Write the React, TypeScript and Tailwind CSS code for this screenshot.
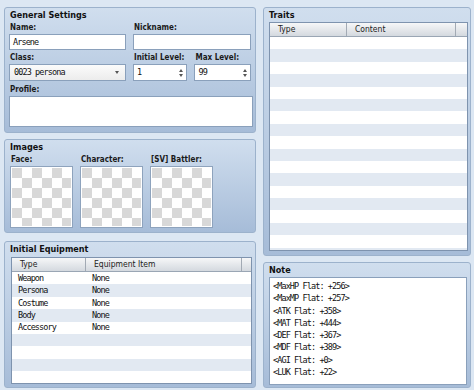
import React from "react";

const sans = "font-['DejaVu_Sans_Condensed','DejaVu_Sans',sans-serif] font-stretch-condensed";
const mono = "font-['DejaVu_Sans_Mono',monospace] text-[8.5px] tracking-[-0.9px]";

function Panel({ title, className, children }: { title: string; className?: string; children: React.ReactNode }) {
  return (
    <div
      className={`flex flex-col rounded-[3px] border border-[#9cb2cc] bg-linear-to-b from-[#d0deee] to-[#a6bcd8] px-[4px] ${className ?? ""}`}
    >
      <div className={`${sans} mt-[1px] h-[12px] shrink-0 pl-[1px] text-[9px] font-bold leading-[12px] text-[#111]`}>{title}</div>
      {children}
    </div>
  );
}

function Label({ children }: { children: React.ReactNode }) {
  return <div className={`${sans} h-[13px] pl-[1px] text-[8px] font-bold leading-[13px] text-[#1a1a1a]`}>{children}</div>;
}

function TextBox({ value, className }: { value?: string; className?: string }) {
  return (
    <div className={`flex h-[16px] items-center border border-[#8aa0bb] bg-white pl-[3px] ${mono} text-[#111] ${className ?? ""}`}>
      {value}
    </div>
  );
}

function Spin({ value }: { value: string }) {
  return (
    <div className={`flex h-[17px] items-center justify-between border border-[#8aa0bb] bg-white pl-[3px] pr-[3px] ${mono} text-[#111]`}>
      <span>{value}</span>
      <span className="flex flex-col items-center gap-[2px]">
        <span className="h-0 w-0 border-x-[2.5px] border-b-[3px] border-x-transparent border-b-[#555]" />
        <span className="h-0 w-0 border-x-[2.5px] border-t-[3px] border-x-transparent border-t-[#555]" />
      </span>
    </div>
  );
}

function Checker() {
  return (
    <div className="h-[62px] w-[63px] border border-[#8ea3bd] bg-white p-[1px]">
      <div className="h-full w-full bg-[repeating-conic-gradient(#fff_0_25%,#d8d8d8_0_50%)] bg-size-[20px_20px]" />
    </div>
  );
}

function Table({ cols, rows, total, className }: { cols: { name: string; w: string }[]; rows: string[][]; total: number; className?: string }) {
  const lines = Array.from({ length: total }, (_, i) => rows[i] ?? []);
  return (
    <div className={`flex shrink-0 flex-col overflow-hidden border border-[#7e93ae] bg-white ${className ?? ""}`}>
      <div className="flex h-[14px] shrink-0 border-b border-[#9aa6b4] bg-linear-to-b from-[#f6f7f8] to-[#d4d9df]">
        {cols.map((c) => (
          <div
            key={c.name}
            className={`${sans} ${c.w} border-r border-[#a2aab4] pl-[8px] text-[8.5px] leading-[13px] text-[#222]`}
          >
            {c.name}
          </div>
        ))}
        <div className="flex-1" />
      </div>
      {lines.map((r, i) => (
        <div key={i} className={`flex h-[12.4px] shrink-0 items-center ${i % 2 === 1 ? "bg-[#e2e9f2]" : "bg-white"}`}>
          {cols.map((c, j) => (
            <div key={j} className={`${c.w} pl-[6px] ${mono} text-[#111]`}>
              {r[j] ?? ""}
            </div>
          ))}
        </div>
      ))}
    </div>
  );
}

export default function App() {
  const equip = [
    ["Weapon", "None"],
    ["Persona", "None"],
    ["Costume", "None"],
    ["Body", "None"],
    ["Accessory", "None"],
  ];
  const notes = [
    "<MaxHP Flat: +256>",
    "<MaxMP Flat: +257>",
    "<ATK Flat: +358>",
    "<MAT Flat: +444>",
    "<DEF Flat: +367>",
    "<MDF Flat: +389>",
    "<AGI Flat: +0>",
    "<LUK Flat: +22>",
  ];

  return (
    <div className="flex h-[390px] w-[474px] gap-[7px] overflow-hidden bg-[#dce7f3] pl-[4px] pt-[7px]">
      <div className="flex w-[252px] flex-col">
        <Panel title="General Settings" className="h-[126px]">
          <div className="flex gap-[7px]">
            <div className="w-[118px]">
              <Label>Name:</Label>
              <TextBox value="Arsene" />
            </div>
            <div className="w-[119px]">
              <Label>Nickname:</Label>
              <TextBox />
            </div>
          </div>
          <div className="mt-[1px] flex gap-[7px]">
            <div className="w-[118px]">
              <Label>Class:</Label>
              <div className={`flex h-[17px] items-center justify-between border border-[#8aa0bb] bg-linear-to-b from-[#fbfbfb] to-[#ececec] pl-[4px] pr-[6px] ${mono} text-[#111]`}>
                <span>0023 persona</span>
                <span className="h-0 w-0 border-x-[2.5px] border-t-[3px] border-x-transparent border-t-[#555]" />
              </div>
            </div>
            <div className="w-[55px]">
              <Label>Initial Level:</Label>
              <Spin value="1" />
            </div>
            <div className="w-[57px]">
              <Label>Max Level:</Label>
              <Spin value="99" />
            </div>
          </div>
          <div className="mt-[2px]">
            <Label>Profile:</Label>
            <div className="h-[31px] w-[244px] border border-[#8aa0bb] bg-white" />
          </div>
        </Panel>

        <Panel title="Images" className="mt-[6px] h-[94px]">
          <div className="flex gap-[7px] pl-[1px]">
            <div>
              <Label>Face:</Label>
              <Checker />
            </div>
            <div>
              <Label>Character:</Label>
              <Checker />
            </div>
            <div>
              <Label>[SV] Battler:</Label>
              <Checker />
            </div>
          </div>
        </Panel>

        <Panel title="Initial Equipment" className="mt-[8px] h-[147px]">
          <Table
            className="ml-[2px] mt-[2px] h-[127px] w-[241px]"
            cols={[
              { name: "Type", w: "w-[74px]" },
              { name: "Equipment Item", w: "w-[156px]" },
            ]}
            rows={equip}
            total={9}
          />
        </Panel>
      </div>

      <div className="flex w-[208px] flex-col">
        <Panel title="Traits" className="h-[249px]">
          <Table
            className="ml-[1px] mt-[1px] h-[229px] w-[199px]"
            cols={[
              { name: "Type", w: "w-[77px]" },
              { name: "Content", w: "w-[109px]" },
            ]}
            rows={[]}
            total={18}
          />
        </Panel>

        <Panel title="Note" className="mt-[6px] h-[126px]">
          <div className={`ml-[1px] mt-[1px] h-[108px] w-[198px] shrink-0 border border-[#8aa0bb] bg-white pl-[3px] pt-[2px] ${mono} leading-[12.3px] text-[#111]`}>
            {notes.map((n) => (
              <div key={n}>{n}</div>
            ))}
          </div>
        </Panel>
      </div>
    </div>
  );
}
